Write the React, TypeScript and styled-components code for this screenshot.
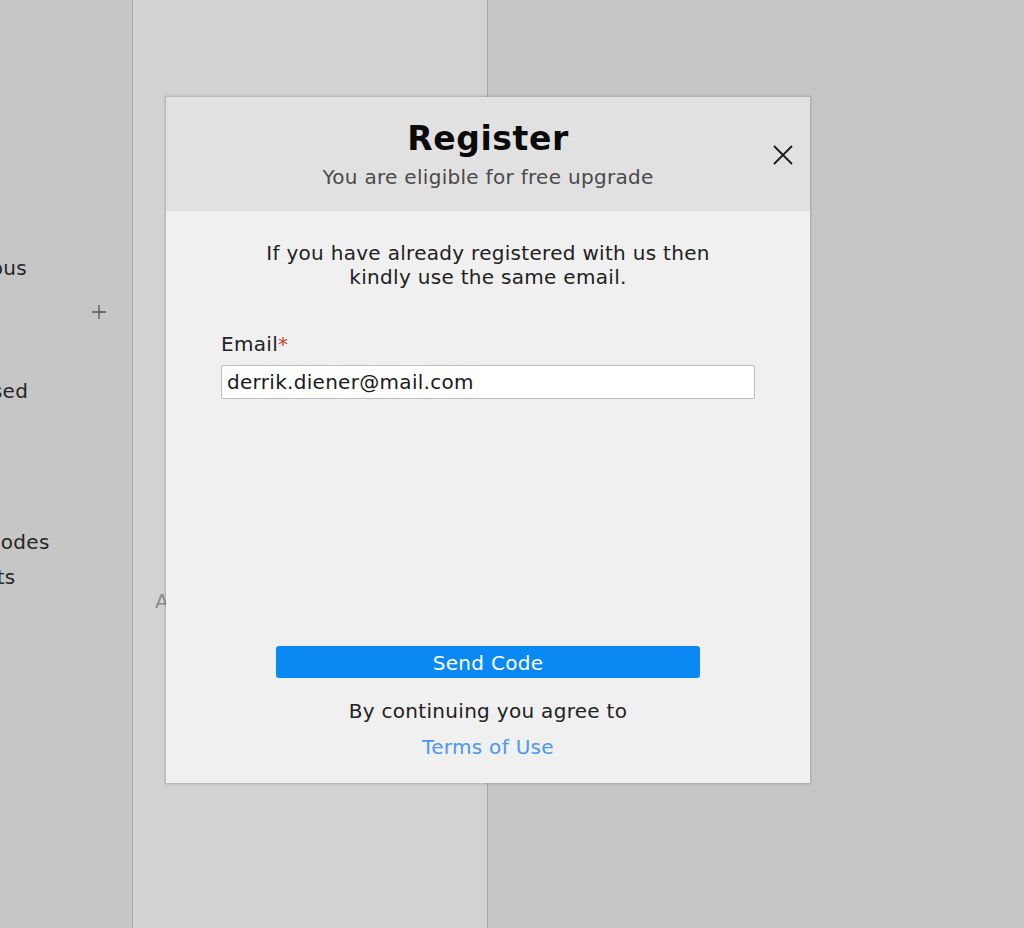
import React from "react";
import styled, { createGlobalStyle } from "styled-components";

const GlobalStyle = createGlobalStyle`
  html, body {
    margin: 0;
    padding: 0;
    height: 100%;
  }
  body {
    font-family: "DejaVu Sans", "Liberation Sans", sans-serif;
    letter-spacing: 0.3px;
    background: #c6c6c6;
    overflow: hidden;
  }
  #root {
    height: 100%;
  }
`;

const Page = styled.div`
  position: relative;
  display: flex;
  width: 1024px;
  height: 928px;
  overflow: hidden;
`;

const Sidebar = styled.aside`
  display: flex;
  width: 132px;
  flex-shrink: 0;
  background: #c6c6c6;
  border-right: 1px solid #a9a9a9;
  overflow: hidden;
`;

const SidebarInner = styled.div`
  display: flex;
  flex-direction: column;
  flex-shrink: 0;
  width: 210px;
  margin-left: -78px;
`;

const SidebarItem = styled.div<{ top: number }>`
  display: flex;
  align-items: center;
  justify-content: space-between;
  margin-top: ${(p) => p.top}px;
  padding-right: 25px;
  height: 24px;
  font-size: 20px;
  line-height: 24px;
  color: #262626;
  white-space: nowrap;
`;

const PlusIcon = styled.span`
  display: flex;
  color: #555;
`;

const Middle = styled.section`
  display: flex;
  flex-direction: column;
  width: 355px;
  flex-shrink: 0;
  background: #d2d2d2;
  border-right: 1px solid #a9a9a9;
  padding-left: 22px;
  box-sizing: border-box;
`;

const Placeholder = styled.div`
  margin-top: 589px;
  font-size: 20px;
  line-height: 24px;
  color: #8c8c8c;
`;

const RightPane = styled.section`
  flex: 1;
  background: #c6c6c6;
`;

const Modal = styled.div`
  position: absolute;
  left: 166px;
  top: 97px;
  width: 644px;
  height: 686px;
  display: flex;
  flex-direction: column;
  background: #f0f0f0;
  box-shadow: 0 0 2px 1px rgba(0, 0, 0, 0.18);
`;

const Header = styled.header`
  position: relative;
  display: flex;
  flex-direction: column;
  align-items: center;
  gap: 6px;
  padding: 22px 0 22px;
  background: #e1e1e1;
`;

const Title = styled.h1`
  margin: 0;
  font-size: 33px;
  line-height: 40px;
  font-weight: bold;
  letter-spacing: 0.6px;
  color: #0a0a0a;
`;

const Subtitle = styled.p`
  margin: 0;
  font-size: 20px;
  line-height: 24px;
  color: #4a4a4a;
`;

const CloseButton = styled.button`
  position: absolute;
  right: 16px;
  top: 47px;
  display: flex;
  padding: 0;
  border: 0;
  background: transparent;
  cursor: pointer;
`;

const Body = styled.div`
  flex: 1;
  display: flex;
  flex-direction: column;
  padding: 30px 55px 24px;
`;

const Intro = styled.p`
  margin: 0;
  text-align: center;
  font-size: 20px;
  line-height: 24px;
  color: #222;
`;

const Field = styled.label`
  display: flex;
  flex-direction: column;
  gap: 9px;
  margin-top: 43px;
`;

const LabelText = styled.span`
  font-size: 20px;
  line-height: 24px;
  color: #222;
`;

const Required = styled.span`
  color: #d0401c;
`;

const Input = styled.input`
  height: 34px;
  box-sizing: border-box;
  padding: 0 5px;
  border: 1px solid #bdbdbd;
  border-radius: 2px;
  background: #fff;
  font-family: inherit;
  font-size: 20px;
  letter-spacing: 0.3px;
  color: #1a1a1a;
  outline: none;
`;

const Spacer = styled.div`
  flex: 1;
`;

const Actions = styled.div`
  display: flex;
  flex-direction: column;
  align-items: center;
`;

const PrimaryButton = styled.button`
  width: 424px;
  height: 32px;
  border: 0;
  border-radius: 3px;
  background: #0a88f4;
  color: #fff;
  font-family: inherit;
  font-size: 20px;
  letter-spacing: 0.3px;
  line-height: 32px;
  cursor: pointer;
`;

const Note = styled.p`
  margin: 21px 0 0;
  font-size: 20px;
  line-height: 24px;
  color: #222;
`;

const TermsLink = styled.a`
  margin-top: 12px;
  font-size: 20px;
  line-height: 24px;
  color: #4a98f0;
  text-decoration: none;
`;

export default function App() {
  return (
    <>
      <GlobalStyle />
      <Page>
        <Sidebar>
          <SidebarInner>
            <SidebarItem top={256}>Numerous</SidebarItem>
            <SidebarItem top={20}>
              <span />
              <PlusIcon>
                <svg width="16" height="16" viewBox="0 0 16 16">
                  <path d="M8 1v14M1 8h14" stroke="currentColor" strokeWidth="1.3" fill="none" />
                </svg>
              </PlusIcon>
            </SidebarItem>
            <SidebarItem top={55}>Purchased</SidebarItem>
            <SidebarItem top={127}>Invite Codes</SidebarItem>
            <SidebarItem top={11}>Accounts</SidebarItem>
          </SidebarInner>
        </Sidebar>
        <Middle>
          <Placeholder>Add a note</Placeholder>
        </Middle>
        <RightPane />

        <Modal>
          <Header>
            <Title>Register</Title>
            <Subtitle>You are eligible for free upgrade</Subtitle>
            <CloseButton aria-label="Close">
              <svg width="22" height="22" viewBox="0 0 22 22">
                <path d="M2 2L20 20M20 2L2 20" stroke="#1a1a1a" strokeWidth="1.8" fill="none" />
              </svg>
            </CloseButton>
          </Header>
          <Body>
            <Intro>
              If you have already registered with us then
              <br />
              kindly use the same email.
            </Intro>
            <Field>
              <LabelText>
                Email<Required>*</Required>
              </LabelText>
              <Input type="email" defaultValue="derrik.diener@mail.com" />
            </Field>
            <Spacer />
            <Actions>
              <PrimaryButton>Send Code</PrimaryButton>
              <Note>By continuing you agree to</Note>
              <TermsLink href="#">Terms of Use</TermsLink>
            </Actions>
          </Body>
        </Modal>
      </Page>
    </>
  );
}
